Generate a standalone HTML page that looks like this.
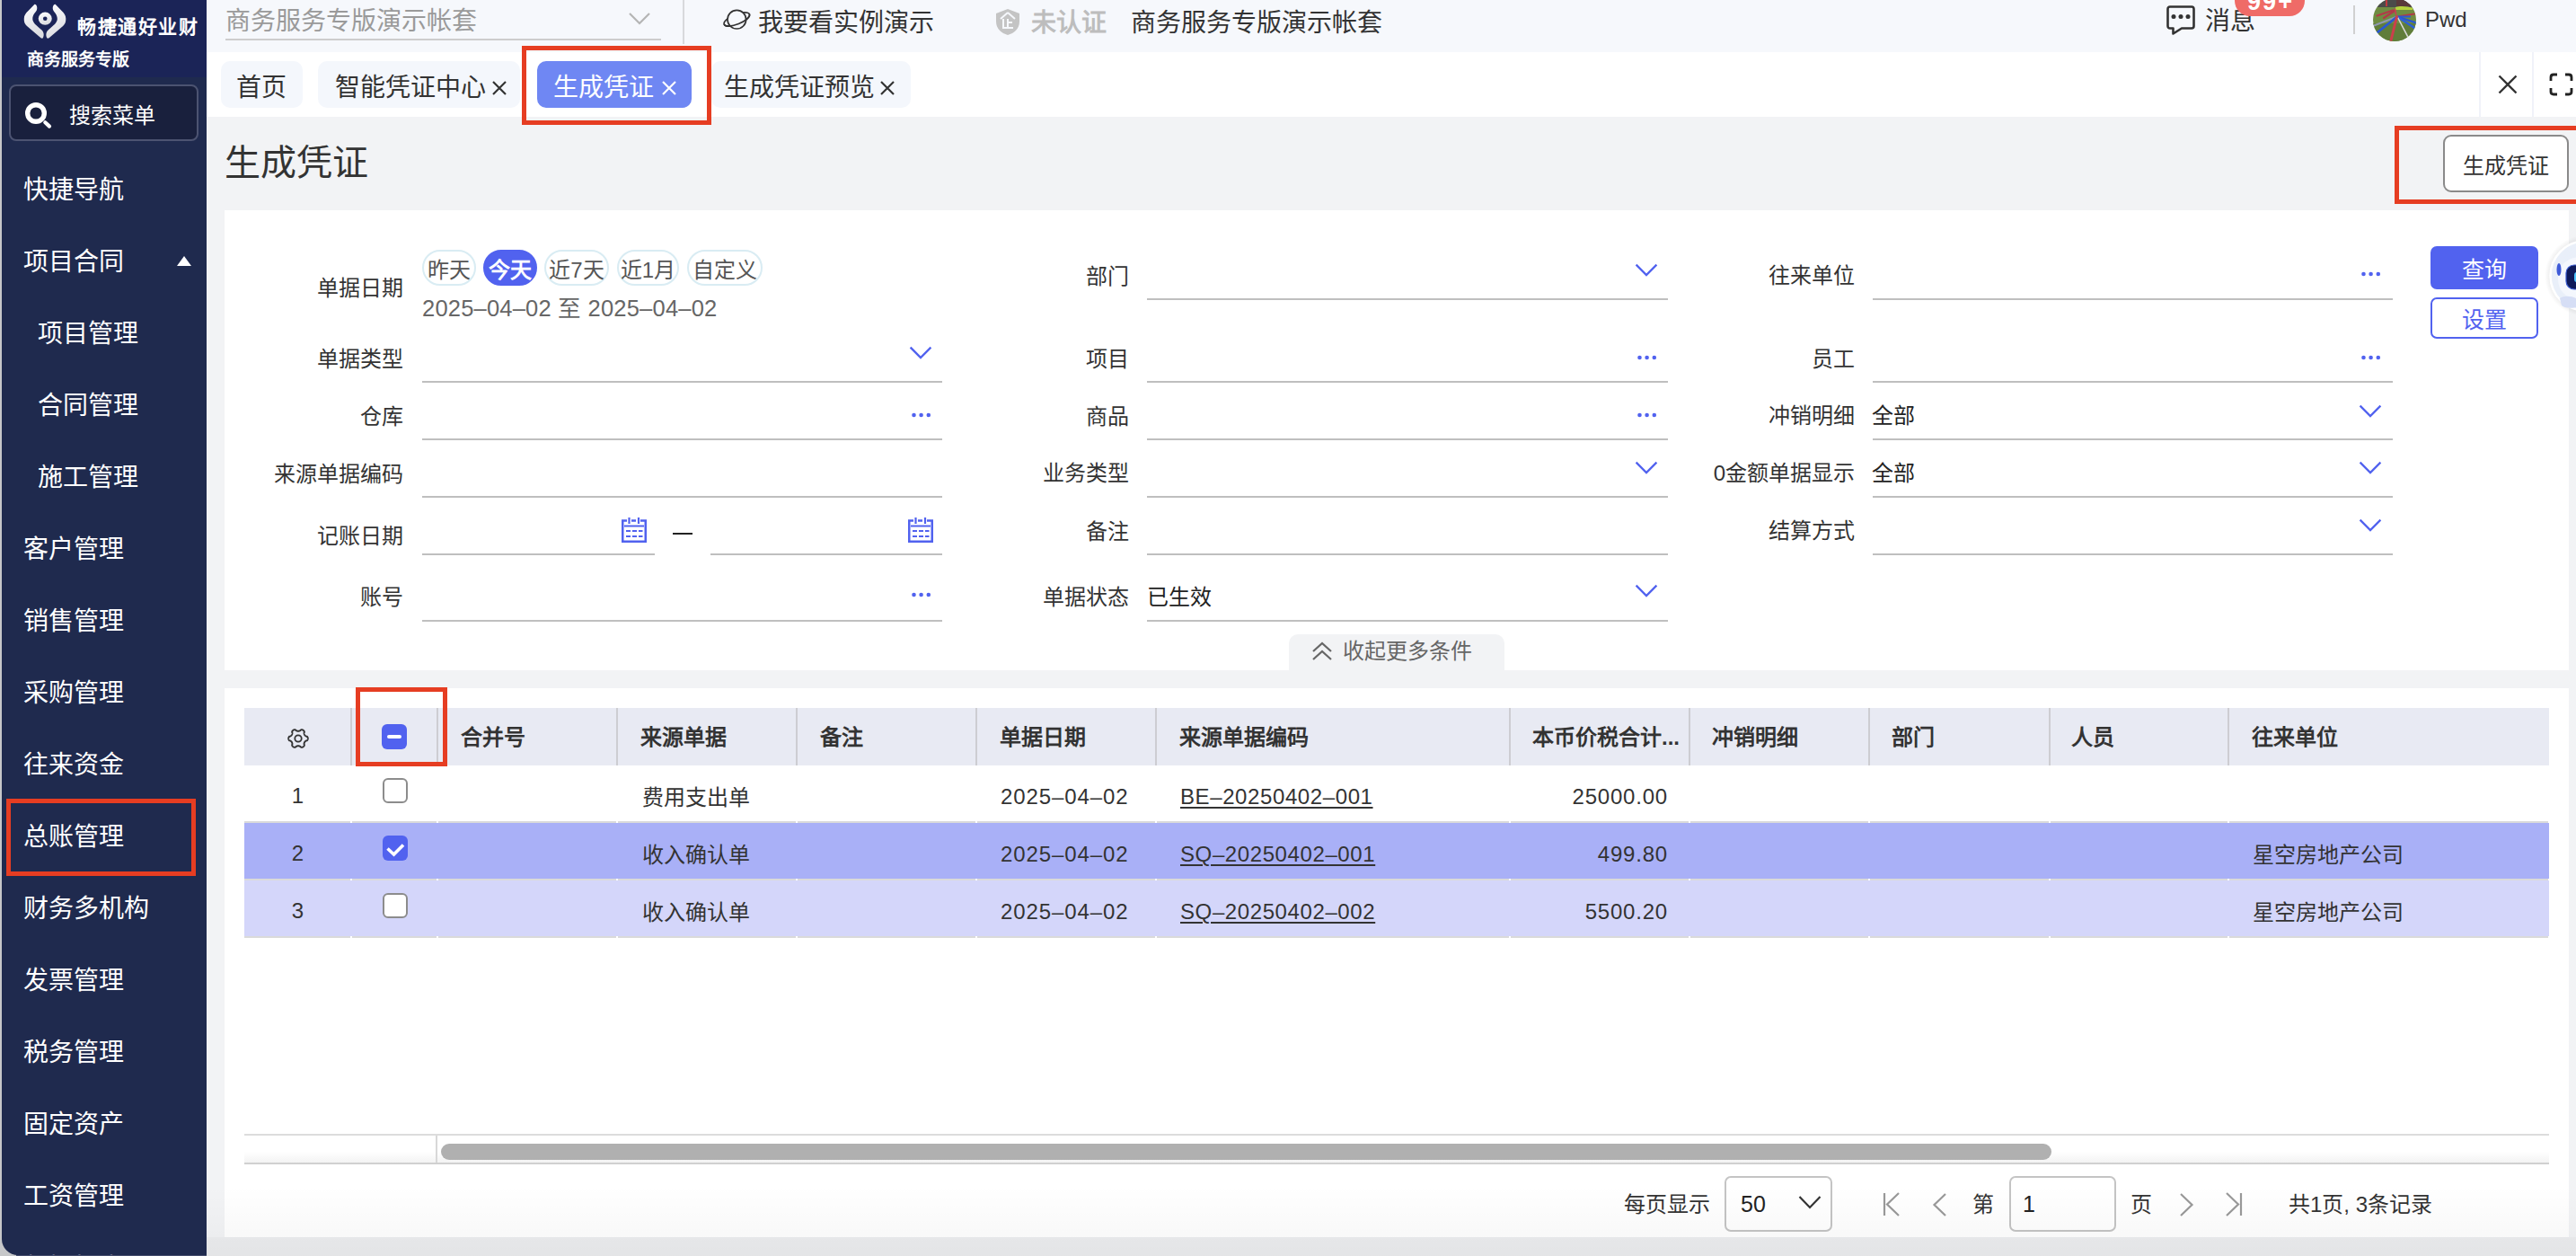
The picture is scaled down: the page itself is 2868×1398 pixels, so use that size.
<!DOCTYPE html>
<html lang="zh-CN">
<head>
<meta charset="utf-8">
<style>
*{box-sizing:border-box;margin:0;padding:0}
html,body{width:2868px;height:1398px;overflow:hidden}
body{position:relative;background:#f2f3f5;font-family:"Liberation Sans",sans-serif;color:#333;}
.a{position:absolute;white-space:nowrap}
/* sidebar */
#sbg{position:absolute;left:0;top:0;width:30px;height:1398px;background:#c6c7c9}
#sbot{position:absolute;left:18px;top:1396px;width:212px;height:2px;background:#454d6e}
#side{position:absolute;left:2px;top:0;width:228px;height:1397px;background:#1f2a4e;border-bottom-left-radius:18px;overflow:hidden}
#side .hd{position:absolute;left:0;top:0;width:230px;height:86px;background:#1b2457}
#side .m{position:absolute;left:24px;color:#fff;font-size:28px;font-weight:500;line-height:40px}
#side .m.s{left:40px}
/* top bar */
#top{position:absolute;left:230px;top:0;width:2638px;height:58px;background:#f6f8fc}
#tabs{position:absolute;left:230px;top:58px;width:2638px;height:72px;background:#fff}
.tab{position:absolute;top:10px;height:52px;border-radius:10px;background:#f4f7fc;font-size:28px;line-height:59px;color:#333}
.red{position:absolute;border:5px solid #e63d22}
.lbl{position:absolute;font-size:24px;line-height:30px;color:#333;text-align:right;white-space:nowrap}
.ln{position:absolute;height:2px;background:#bfbfbf}
.val{position:absolute;font-size:24px;line-height:30px;color:#222;white-space:nowrap}
.dots{position:absolute;width:22px;height:6px}
.dots i{position:absolute;top:0;width:5px;height:5px;border-radius:50%;background:#5262ef}
.chev{position:absolute;width:26px;height:16px}
.chip{position:absolute;top:278px;height:40px;border:2px solid #d9ecf3;border-radius:20px;font-size:24px;line-height:41px;color:#555;text-align:center}
.th{position:absolute;top:788px;height:64px;font-size:24px;line-height:64px;font-weight:bold;color:#333}
.vd{position:absolute;width:2px;background:#cfcfcf}
.td{position:absolute;font-size:24px;line-height:30px;color:#333;white-space:nowrap}
</style>
</head>
<body>

<!-- SIDEBAR -->
<div id="sbg"></div>
<div id="sbot"></div>
<div id="side">
  <div class="hd"></div>
  <svg class="a" style="left:18px;top:0px" width="60" height="50" viewBox="0 0 60 50">
    <defs><linearGradient id="lg" x1="0" y1="0" x2="0.3" y2="1"><stop offset="0" stop-color="#ffffff"/><stop offset="1" stop-color="#dcdde2"/></linearGradient></defs>
    <path d="M18.5 4.8 C20.5 4.5 22 8 21 11 C20 13.5 16.3 16 16.3 21 C16.3 25 20 28 26 33 C29 35.5 29.2 39 28 42 C27.5 43 26.5 43 25.5 42.3 L10 29 C6.5 26 6.8 22 6.8 20.5 C6.8 17 9 14.5 11 12.5 Z" fill="url(#lg)"/>
    <path d="M41.6 4.8 C39.6 4.5 38.1 8 39.1 11 C40.1 13.5 43.8 16 43.8 21 C43.8 25 40.1 28 34.1 33 C31.1 35.5 30.9 39 32.1 42 C32.6 43 33.6 43 34.6 42.3 L50.1 29 C53.6 26 53.3 22 53.3 20.5 C53.3 17 51.1 14.5 49.1 12.5 Z" fill="url(#lg)"/>
    <ellipse cx="30.25" cy="20.7" rx="7.5" ry="7.1" fill="url(#lg)"/>
    <circle cx="30.25" cy="20.7" r="2.3" fill="#1b2457"/>
  </svg>
  <div class="a" style="left:84px;top:16px;font-size:21px;line-height:28px;font-weight:bold;color:#fff;letter-spacing:1.6px">畅捷通好业财</div>
  <div class="a" style="left:28px;top:53px;font-size:19px;line-height:28px;font-weight:bold;color:#fff">商务服务专版</div>
  <div class="a" style="left:8px;top:94px;width:211px;height:63px;border:2px solid #4c5371;border-radius:8px;background:#19203d"></div>
  <svg class="a" style="left:22px;top:110px" width="36" height="36" viewBox="0 0 36 36">
    <circle cx="16" cy="16" r="9.3" fill="none" stroke="#fff" stroke-width="5.4"/>
    <line x1="26.3" y1="26.3" x2="31" y2="30.6" stroke="#fff" stroke-width="4.2" stroke-linecap="round"/>
  </svg>
  <div class="a" style="left:75px;top:112px;font-size:24px;line-height:34px;font-weight:500;color:#fff">搜索菜单</div>
  <div class="m" style="top:192px">快捷导航</div>
  <div class="m" style="top:272px">项目合同</div>
  <svg class="a" style="left:194px;top:284px" width="18" height="13" viewBox="0 0 18 13"><path d="M9 1 L17 12 L1 12 Z" fill="#fff"/></svg>
  <div class="m s" style="top:352px">项目管理</div>
  <div class="m s" style="top:432px">合同管理</div>
  <div class="m s" style="top:512px">施工管理</div>
  <div class="m" style="top:592px">客户管理</div>
  <div class="m" style="top:672px">销售管理</div>
  <div class="m" style="top:752px">采购管理</div>
  <div class="m" style="top:832px">往来资金</div>
  <div class="m" style="top:912px">总账管理</div>
  <div class="m" style="top:992px">财务多机构</div>
  <div class="m" style="top:1072px">发票管理</div>
  <div class="m" style="top:1152px">税务管理</div>
  <div class="m" style="top:1232px">固定资产</div>
  <div class="m" style="top:1312px">工资管理</div>
  <div class="m" style="top:1392px">数据报表</div>
</div>
<div class="red" style="left:7px;top:889px;width:211px;height:86px"></div>

<!-- TOP BAR -->
<div id="top">
  <div class="a" style="left:21px;top:6px;font-size:28px;line-height:36px;color:#9a9a9a">商务服务专版演示帐套</div>
  <div class="a" style="left:21px;top:43px;width:485px;height:2px;background:#cdcdcd"></div>
  <svg class="a" style="left:469px;top:12px" width="26" height="18" viewBox="0 0 26 18"><path d="M2 3 L13 14 L24 3" fill="none" stroke="#b5b5b5" stroke-width="2.2"/></svg>
  <div class="a" style="left:530px;top:0;width:2px;height:49px;background:#d8d9dc"></div>
  <svg class="a" style="left:574px;top:6px" width="34" height="30" viewBox="0 0 34 30">
    <ellipse cx="16.30" cy="15.50" rx="15.20" ry="5.60" transform="rotate(-22 16.30 15.50)" fill="none" stroke="#333" stroke-width="1.7"/>
    <circle cx="16.3" cy="15.7" r="10.3" fill="#f6f8fc" stroke="#333" stroke-width="1.7"/>
    <path d="M2.21 21.19 A15.20 5.60 -22 0 0 30.39 9.81" fill="none" stroke="#333" stroke-width="1.7"/>
  </svg>
  <div class="a" style="left:614px;top:8px;font-size:28px;line-height:36px;color:#333">我要看实例演示</div>
  <svg class="a" style="left:878px;top:9px" width="28" height="31" viewBox="0 0 28 31">
    <path d="M14 1 L27 6 L27 15 C27 23 21 28 14 30 C7 28 1 23 1 15 L1 6 Z" fill="#c4c4c4"/>
    <path d="M14 5 L22 12 M14 5 L6 12 M9 12 L9 22 L20 22 M14 12 L14 22 M14 16 L19 16" fill="none" stroke="#f6f8fc" stroke-width="2"/>
  </svg>
  <div class="a" style="left:918px;top:8px;font-size:28px;line-height:36px;color:#bdbdbd;font-weight:bold">未认证</div>
  <div class="a" style="left:1029px;top:8px;font-size:28px;line-height:36px;color:#333">商务服务专版演示帐套</div>
  <svg class="a" style="left:2181px;top:5px" width="34" height="34" viewBox="0 0 34 34">
    <path d="M5 2.5 L29 2.5 C30.5 2.5 31.5 3.5 31.5 5 L31.5 24 C31.5 25.5 30.5 26.5 29 26.5 L18 26.5 L8.5 32.5 L8.5 26.5 L5 26.5 C3.5 26.5 2.5 25.5 2.5 24 L2.5 5 C2.5 3.5 3.5 2.5 5 2.5 Z" fill="none" stroke="#333" stroke-width="2.6" stroke-linejoin="round"/>
    <circle cx="9" cy="13.5" r="2.5" fill="#333"/><circle cx="17" cy="13.5" r="2.5" fill="#333"/><circle cx="25" cy="13.5" r="2.5" fill="#333"/>
  </svg>
  <div class="a" style="left:2225px;top:6px;font-size:28px;line-height:36px;color:#333">消息</div>
  <div class="a" style="left:2258px;top:-18px;width:78px;height:36px;border-radius:17px;background:#ef6b67;overflow:hidden"><div class="a" style="left:0;top:6px;width:78px;text-align:center;color:#fff;font-weight:bold;font-size:27px;line-height:28px;letter-spacing:2px;padding-left:2px">99+</div></div>
  <div class="a" style="left:2390px;top:6px;width:2px;height:32px;background:#d0d0d0"></div>
  <svg class="a" style="left:2412px;top:-2px" width="48" height="48" viewBox="0 0 48 48">
    <defs><clipPath id="av"><circle cx="24" cy="24" r="24"/></clipPath></defs>
    <g clip-path="url(#av)">
      <rect width="48" height="48" fill="#6f8c42"/>
      <rect x="0" y="28" width="48" height="20" fill="#607d3a"/>
      <rect width="48" height="10" fill="#4b4b4a"/>
      <rect x="26" y="0" width="22" height="9" fill="#5a3a3a"/>
      <rect x="14" y="0" width="2" height="9" fill="#c0393f"/>
      <path d="M25 10 C30 8 40 9 44 11 L44 13 L25 13 Z" fill="#b5d33c"/>
      <g stroke-linecap="round">
        <path d="M22 13.5 L4.5 19.5" stroke="#b23a48" stroke-width="2.2"/>
        <path d="M24 14 L12 22" stroke="#b23a48" stroke-width="2.2"/>
        <path d="M27 20.5 L46 17.5" stroke="#b03a48" stroke-width="1.8"/>
        <path d="M27 20.5 L41 20.5" stroke="#2b5cd4" stroke-width="2.2"/>
        <path d="M27 20.5 L48 27.5" stroke="#2856d0" stroke-width="2.2"/>
        <path d="M27 20.5 L46 33" stroke="#2c5fd8" stroke-width="2.6"/>
        <path d="M27 20.5 L38.6 42.6" stroke="#d8d8d8" stroke-width="1.6"/>
        <path d="M27 20.5 L1 30.5" stroke="#8f98b0" stroke-width="2"/>
        <path d="M27 20.5 L5 38" stroke="#2a58d2" stroke-width="2.8"/>
        <path d="M26.5 20.5 L20 47" stroke="#cc3f4b" stroke-width="3"/>
        <path d="M25.5 18 L24.5 12" stroke="#c94050" stroke-width="1.6"/>
      </g>
    </g>
  </svg>
  <div class="a" style="left:2470px;top:8px;font-size:24px;line-height:28px;color:#333">Pwd</div>
</div>
<div id="tabs">
  <div class="tab" style="left:16px;width:91px;padding-left:17px">首页</div>
  <div class="tab" style="left:124px;width:225px;padding-left:19px">智能凭证中心<svg class="a" style="left:194px;top:22px" width="16" height="16" viewBox="0 0 16 16"><path d="M1 1 L15 15 M15 1 L1 15" stroke="#333" stroke-width="2.2"/></svg></div>
  <div class="tab" style="left:368px;width:172px;padding-left:18px;background:#6f87f3;color:#fff">生成凭证<svg class="a" style="left:139px;top:22px" width="16" height="16" viewBox="0 0 16 16"><path d="M1 1 L15 15 M15 1 L1 15" stroke="#fff" stroke-width="2.2"/></svg></div>
  <div class="tab" style="left:562px;width:222px;padding-left:14px">生成凭证预览<svg class="a" style="left:188px;top:22px" width="16" height="16" viewBox="0 0 16 16"><path d="M1 1 L15 15 M15 1 L1 15" stroke="#333" stroke-width="2.2"/></svg></div>
  <div class="a" style="left:2530px;top:0;width:2px;height:72px;background:#f0f2f9"></div>
  <div class="a" style="left:2589px;top:0;width:2px;height:72px;background:#f0f2f9"></div>
  <svg class="a" style="left:2551px;top:25px" width="22" height="22" viewBox="0 0 22 22"><path d="M1.5 1.5 L20.5 20.5 M20.5 1.5 L1.5 20.5" stroke="#333" stroke-width="2.4"/></svg>
  <svg class="a" style="left:2608px;top:23px" width="27" height="26" viewBox="0 0 27 26">
    <path d="M2 9 L2 5 C2 3.3 3.3 2 5 2 L9 2 M18 2 L22 2 C23.7 2 25 3.3 25 5 L25 9 M25 17 L25 21 C25 22.7 23.7 24 22 24 L18 24 M9 24 L5 24 C3.3 24 2 22.7 2 21 L2 17" fill="none" stroke="#222" stroke-width="2.8"/>
  </svg>
</div>
<div class="red" style="left:581px;top:51px;width:211px;height:88px"></div>

<!-- PAGE HEADER -->
<div class="a" style="left:250px;top:153px;font-size:40px;line-height:56px;color:#333">生成凭证</div>
<div class="a" style="left:2720px;top:150px;width:140px;height:64px;border:2px solid #8a8a8a;border-radius:9px;background:#fff;font-size:24px;line-height:66px;text-align:center;color:#333">生成凭证</div>
<div class="red" style="left:2666px;top:140px;width:220px;height:87px"></div>

<!-- FORM PANEL -->
<div class="a" style="left:250px;top:234px;width:2610px;height:512px;background:#fff"></div>
<!-- FORM START -->
<div class="lbl" style="left:149px;top:306px;width:300px">单据日期</div>
<div class="lbl" style="left:149px;top:385px;width:300px">单据类型</div>
<div class="ln" style="left:470px;top:424px;width:579px"></div>
<svg class="a" style="left:1012px;top:385px" width="26" height="16" viewBox="0 0 26 16"><path d="M1.6 1.6 L13 13 L24.4 1.6" fill="none" stroke="#5162ef" stroke-width="2.3"/></svg>
<div class="lbl" style="left:149px;top:449px;width:300px">仓库</div>
<div class="ln" style="left:470px;top:488px;width:579px"></div>
<svg class="a" style="left:1015px;top:459px" width="22" height="6" viewBox="0 0 22 6"><circle cx="2.5" cy="3" r="2.3" fill="#5162ef"/><circle cx="10.6" cy="3" r="2.3" fill="#5162ef"/><circle cx="18.8" cy="3" r="2.3" fill="#5162ef"/></svg>
<div class="lbl" style="left:149px;top:513px;width:300px">来源单据编码</div>
<div class="ln" style="left:470px;top:552px;width:579px"></div>
<div class="lbl" style="left:149px;top:582px;width:300px">记账日期</div>
<div class="ln" style="left:470px;top:616px;width:259px"></div>
<div class="ln" style="left:791px;top:616px;width:258px"></div>
<svg class="a" style="left:692px;top:576px" width="28" height="28" viewBox="0 0 28 28">
<path d="M1.25 28 L1.25 3.5 L6 3.5 M11 3.5 L16 3.5 M21 3.5 L26.75 3.5 L26.75 28" fill="none" stroke="#5162ef" stroke-width="2.5"/>
<path d="M1.25 26.75 L26.75 26.75" stroke="#5162ef" stroke-width="2.5"/>
<path d="M8.5 0 L8.5 7 M19 0 L19 7" stroke="#5162ef" stroke-width="2.2"/>
<path d="M3 9.5 L25 9.5" stroke="#5162ef" stroke-width="2"/>
<path d="M5 15 L10 15 M12 15 L17 15 M19 15 L23.5 15 M5 21 L10 21 M12 21 L17 21 M19 21 L23.5 21" stroke="#5162ef" stroke-width="2"/>
</svg>
<svg class="a" style="left:1011px;top:576px" width="28" height="28" viewBox="0 0 28 28">
<path d="M1.25 28 L1.25 3.5 L6 3.5 M11 3.5 L16 3.5 M21 3.5 L26.75 3.5 L26.75 28" fill="none" stroke="#5162ef" stroke-width="2.5"/>
<path d="M1.25 26.75 L26.75 26.75" stroke="#5162ef" stroke-width="2.5"/>
<path d="M8.5 0 L8.5 7 M19 0 L19 7" stroke="#5162ef" stroke-width="2.2"/>
<path d="M3 9.5 L25 9.5" stroke="#5162ef" stroke-width="2"/>
<path d="M5 15 L10 15 M12 15 L17 15 M19 15 L23.5 15 M5 21 L10 21 M12 21 L17 21 M19 21 L23.5 21" stroke="#5162ef" stroke-width="2"/>
</svg>
<div class="a" style="left:749px;top:593px;width:22px;height:2px;background:#222"></div>
<div class="lbl" style="left:149px;top:650px;width:300px">账号</div>
<div class="ln" style="left:470px;top:690px;width:579px"></div>
<svg class="a" style="left:1015px;top:659px" width="22" height="6" viewBox="0 0 22 6"><circle cx="2.5" cy="3" r="2.3" fill="#5162ef"/><circle cx="10.6" cy="3" r="2.3" fill="#5162ef"/><circle cx="18.8" cy="3" r="2.3" fill="#5162ef"/></svg>
<div class="lbl" style="left:957px;top:293px;width:300px">部门</div>
<div class="ln" style="left:1277px;top:332px;width:580px"></div>
<svg class="a" style="left:1820px;top:293px" width="26" height="16" viewBox="0 0 26 16"><path d="M1.6 1.6 L13 13 L24.4 1.6" fill="none" stroke="#5162ef" stroke-width="2.3"/></svg>
<div class="lbl" style="left:957px;top:385px;width:300px">项目</div>
<div class="ln" style="left:1277px;top:424px;width:580px"></div>
<svg class="a" style="left:1823px;top:395px" width="22" height="6" viewBox="0 0 22 6"><circle cx="2.5" cy="3" r="2.3" fill="#5162ef"/><circle cx="10.6" cy="3" r="2.3" fill="#5162ef"/><circle cx="18.8" cy="3" r="2.3" fill="#5162ef"/></svg>
<div class="lbl" style="left:957px;top:449px;width:300px">商品</div>
<div class="ln" style="left:1277px;top:488px;width:580px"></div>
<svg class="a" style="left:1823px;top:459px" width="22" height="6" viewBox="0 0 22 6"><circle cx="2.5" cy="3" r="2.3" fill="#5162ef"/><circle cx="10.6" cy="3" r="2.3" fill="#5162ef"/><circle cx="18.8" cy="3" r="2.3" fill="#5162ef"/></svg>
<div class="lbl" style="left:957px;top:512px;width:300px">业务类型</div>
<div class="ln" style="left:1277px;top:552px;width:580px"></div>
<svg class="a" style="left:1820px;top:513px" width="26" height="16" viewBox="0 0 26 16"><path d="M1.6 1.6 L13 13 L24.4 1.6" fill="none" stroke="#5162ef" stroke-width="2.3"/></svg>
<div class="lbl" style="left:957px;top:577px;width:300px">备注</div>
<div class="ln" style="left:1277px;top:616px;width:580px"></div>
<div class="lbl" style="left:957px;top:650px;width:300px">单据状态</div>
<div class="ln" style="left:1277px;top:690px;width:580px"></div>
<svg class="a" style="left:1820px;top:650px" width="26" height="16" viewBox="0 0 26 16"><path d="M1.6 1.6 L13 13 L24.4 1.6" fill="none" stroke="#5162ef" stroke-width="2.3"/></svg>
<div class="val" style="left:1277px;top:650px">已生效</div>
<div class="lbl" style="left:1765px;top:292px;width:300px">往来单位</div>
<div class="ln" style="left:2085px;top:332px;width:579px"></div>
<svg class="a" style="left:2629px;top:302px" width="22" height="6" viewBox="0 0 22 6"><circle cx="2.5" cy="3" r="2.3" fill="#5162ef"/><circle cx="10.6" cy="3" r="2.3" fill="#5162ef"/><circle cx="18.8" cy="3" r="2.3" fill="#5162ef"/></svg>
<div class="lbl" style="left:1765px;top:385px;width:300px">员工</div>
<div class="ln" style="left:2085px;top:424px;width:579px"></div>
<svg class="a" style="left:2629px;top:395px" width="22" height="6" viewBox="0 0 22 6"><circle cx="2.5" cy="3" r="2.3" fill="#5162ef"/><circle cx="10.6" cy="3" r="2.3" fill="#5162ef"/><circle cx="18.8" cy="3" r="2.3" fill="#5162ef"/></svg>
<div class="lbl" style="left:1765px;top:448px;width:300px">冲销明细</div>
<div class="ln" style="left:2085px;top:488px;width:579px"></div>
<svg class="a" style="left:2626px;top:450px" width="26" height="16" viewBox="0 0 26 16"><path d="M1.6 1.6 L13 13 L24.4 1.6" fill="none" stroke="#5162ef" stroke-width="2.3"/></svg>
<div class="val" style="left:2084px;top:448px">全部</div>
<div class="lbl" style="left:1765px;top:512px;width:300px">0金额单据显示</div>
<div class="ln" style="left:2085px;top:552px;width:579px"></div>
<svg class="a" style="left:2626px;top:513px" width="26" height="16" viewBox="0 0 26 16"><path d="M1.6 1.6 L13 13 L24.4 1.6" fill="none" stroke="#5162ef" stroke-width="2.3"/></svg>
<div class="val" style="left:2084px;top:512px">全部</div>
<div class="lbl" style="left:1765px;top:576px;width:300px">结算方式</div>
<div class="ln" style="left:2085px;top:616px;width:579px"></div>
<svg class="a" style="left:2626px;top:577px" width="26" height="16" viewBox="0 0 26 16"><path d="M1.6 1.6 L13 13 L24.4 1.6" fill="none" stroke="#5162ef" stroke-width="2.3"/></svg>
<div class="chip" style="left:470px;width:60px">昨天</div>
<div class="chip" style="left:538px;width:60px;background:#5162ef;border-color:#5162ef;color:#fff;font-weight:bold">今天</div>
<div class="chip" style="left:606px;width:72px">近7天</div>
<div class="chip" style="left:687px;width:69px">近1月</div>
<div class="chip" style="left:765px;width:84px">自定义</div>
<div class="a" style="left:470px;top:328px;font-size:25.5px;line-height:30px;color:#666;letter-spacing:0.2px">2025–04–02 至 2025–04–02</div>
<div class="a" style="left:2706px;top:274px;width:120px;height:48px;border-radius:7px;background:#5162ef;color:#fff;font-size:25px;line-height:52px;text-align:center">查询</div>
<div class="a" style="left:2706px;top:331px;width:120px;height:46px;border-radius:7px;border:2px solid #5162ef;background:#fff;color:#5162ef;font-size:25px;line-height:46px;text-align:center">设置</div>
<div class="a" style="left:1435px;top:706px;width:240px;height:40px;border-radius:10px 10px 0 0;background:#f2f3f5"></div>
<svg class="a" style="left:1460px;top:714px" width="24" height="22" viewBox="0 0 24 22"><path d="M2 11 L12 2 L22 11 M2 20 L12 11 L22 20" fill="none" stroke="#666" stroke-width="2.2"/></svg>
<div class="a" style="left:1495px;top:710px;font-size:24px;line-height:30px;color:#666">收起更多条件</div>
<svg class="a" style="left:2826px;top:256px" width="42" height="104" viewBox="0 0 42 104">
<defs><radialGradient id="rsh" cx="0.5" cy="0.5" r="0.5"><stop offset="0.8" stop-color="#000" stop-opacity="0.10"/><stop offset="1" stop-color="#000" stop-opacity="0"/></radialGradient></defs>
<circle cx="52" cy="51" r="45" fill="url(#rsh)"/>
<circle cx="52" cy="51" r="38.5" fill="#e9eff9" stroke="#ffffff" stroke-width="2.5"/>
<path d="M22 54 C22 38 34 30 48 30 L48 78 C34 78 22 70 22 54 Z" fill="#f4f7fd"/>
<ellipse cx="23" cy="44" rx="2.5" ry="7" fill="#3f5bd8"/>
<rect x="31" y="39" width="24" height="27" rx="9" fill="#0e1a5a" stroke="#3a5bd0" stroke-width="1.2"/>
<rect x="40" y="47" width="8" height="11" rx="3" fill="#4cc3ff"/>
<path d="M24 76 C28 73 36 73 42 76 L42 86 C34 88 28 86 26 84 Z" fill="#d6def5"/>
</svg>
<!-- FORM END -->
<!-- TABLE PANEL -->
<div class="a" style="left:250px;top:766px;width:2610px;height:611px;background:#fff"></div>
<!-- TABLE START -->
<div class="a" style="left:272px;top:788px;width:2566px;height:64px;background:#e8eaf3"></div>
<div class="a" style="left:390px;top:788px;width:2px;height:64px;background:#cdcdd2"></div>
<div class="a" style="left:486px;top:788px;width:2px;height:64px;background:#cdcdd2"></div>
<div class="a" style="left:686px;top:788px;width:2px;height:64px;background:#cdcdd2"></div>
<div class="a" style="left:886px;top:788px;width:2px;height:64px;background:#cdcdd2"></div>
<div class="a" style="left:1086px;top:788px;width:2px;height:64px;background:#cdcdd2"></div>
<div class="a" style="left:1286px;top:788px;width:2px;height:64px;background:#cdcdd2"></div>
<div class="a" style="left:1680px;top:788px;width:2px;height:64px;background:#cdcdd2"></div>
<div class="a" style="left:1880px;top:788px;width:2px;height:64px;background:#cdcdd2"></div>
<div class="a" style="left:2080px;top:788px;width:2px;height:64px;background:#cdcdd2"></div>
<div class="a" style="left:2281px;top:788px;width:2px;height:64px;background:#cdcdd2"></div>
<div class="a" style="left:2480px;top:788px;width:2px;height:64px;background:#cdcdd2"></div>
<div class="a" style="left:272px;top:852px;width:2566px;height:62px;background:#ffffff"></div>
<div class="a" style="left:272px;top:914px;width:118px;height:2px;background:#dadada"></div>
<div class="a" style="left:392px;top:914px;width:94px;height:2px;background:#dadada"></div>
<div class="a" style="left:488px;top:914px;width:198px;height:2px;background:#dadada"></div>
<div class="a" style="left:688px;top:914px;width:198px;height:2px;background:#dadada"></div>
<div class="a" style="left:888px;top:914px;width:198px;height:2px;background:#dadada"></div>
<div class="a" style="left:1088px;top:914px;width:198px;height:2px;background:#dadada"></div>
<div class="a" style="left:1288px;top:914px;width:392px;height:2px;background:#dadada"></div>
<div class="a" style="left:1682px;top:914px;width:198px;height:2px;background:#dadada"></div>
<div class="a" style="left:1882px;top:914px;width:198px;height:2px;background:#dadada"></div>
<div class="a" style="left:2082px;top:914px;width:199px;height:2px;background:#dadada"></div>
<div class="a" style="left:2283px;top:914px;width:197px;height:2px;background:#dadada"></div>
<div class="a" style="left:2482px;top:914px;width:355px;height:2px;background:#dadada"></div>
<div class="a" style="left:272px;top:916px;width:2566px;height:62px;background:#a9b0f7"></div>
<div class="a" style="left:272px;top:978px;width:118px;height:2px;background:#dadada"></div>
<div class="a" style="left:392px;top:978px;width:94px;height:2px;background:#dadada"></div>
<div class="a" style="left:488px;top:978px;width:198px;height:2px;background:#dadada"></div>
<div class="a" style="left:688px;top:978px;width:198px;height:2px;background:#dadada"></div>
<div class="a" style="left:888px;top:978px;width:198px;height:2px;background:#dadada"></div>
<div class="a" style="left:1088px;top:978px;width:198px;height:2px;background:#dadada"></div>
<div class="a" style="left:1288px;top:978px;width:392px;height:2px;background:#dadada"></div>
<div class="a" style="left:1682px;top:978px;width:198px;height:2px;background:#dadada"></div>
<div class="a" style="left:1882px;top:978px;width:198px;height:2px;background:#dadada"></div>
<div class="a" style="left:2082px;top:978px;width:199px;height:2px;background:#dadada"></div>
<div class="a" style="left:2283px;top:978px;width:197px;height:2px;background:#dadada"></div>
<div class="a" style="left:2482px;top:978px;width:355px;height:2px;background:#dadada"></div>
<div class="a" style="left:272px;top:980px;width:2566px;height:62px;background:#d4d6fa"></div>
<div class="a" style="left:272px;top:1042px;width:118px;height:2px;background:#dadada"></div>
<div class="a" style="left:392px;top:1042px;width:94px;height:2px;background:#dadada"></div>
<div class="a" style="left:488px;top:1042px;width:198px;height:2px;background:#dadada"></div>
<div class="a" style="left:688px;top:1042px;width:198px;height:2px;background:#dadada"></div>
<div class="a" style="left:888px;top:1042px;width:198px;height:2px;background:#dadada"></div>
<div class="a" style="left:1088px;top:1042px;width:198px;height:2px;background:#dadada"></div>
<div class="a" style="left:1288px;top:1042px;width:392px;height:2px;background:#dadada"></div>
<div class="a" style="left:1682px;top:1042px;width:198px;height:2px;background:#dadada"></div>
<div class="a" style="left:1882px;top:1042px;width:198px;height:2px;background:#dadada"></div>
<div class="a" style="left:2082px;top:1042px;width:199px;height:2px;background:#dadada"></div>
<div class="a" style="left:2283px;top:1042px;width:197px;height:2px;background:#dadada"></div>
<div class="a" style="left:2482px;top:1042px;width:355px;height:2px;background:#dadada"></div>
<div class="a" style="left:513px;top:806px;font-size:24px;line-height:30px;font-weight:bold;color:#333">合并号</div>
<div class="a" style="left:713px;top:806px;font-size:24px;line-height:30px;font-weight:bold;color:#333">来源单据</div>
<div class="a" style="left:913px;top:806px;font-size:24px;line-height:30px;font-weight:bold;color:#333">备注</div>
<div class="a" style="left:1113px;top:806px;font-size:24px;line-height:30px;font-weight:bold;color:#333">单据日期</div>
<div class="a" style="left:1313px;top:806px;font-size:24px;line-height:30px;font-weight:bold;color:#333">来源单据编码</div>
<div class="a" style="left:1706px;top:806px;font-size:24px;line-height:30px;font-weight:bold;color:#333">本币价税合计...</div>
<div class="a" style="left:1906px;top:806px;font-size:24px;line-height:30px;font-weight:bold;color:#333">冲销明细</div>
<div class="a" style="left:2106px;top:806px;font-size:24px;line-height:30px;font-weight:bold;color:#333">部门</div>
<div class="a" style="left:2306px;top:806px;font-size:24px;line-height:30px;font-weight:bold;color:#333">人员</div>
<div class="a" style="left:2507px;top:806px;font-size:24px;line-height:30px;font-weight:bold;color:#333">往来单位</div>
<svg class="a" style="left:318px;top:808px" width="28" height="28" viewBox="0 0 28 28">
<path d="M24.80 14.00 L24.78 14.38 L24.71 14.75 L24.60 15.11 L24.44 15.47 L24.23 15.80 L23.96 16.12 L23.58 16.39 L22.77 16.52 L22.39 16.73 L22.09 16.95 L21.84 17.17 L21.62 17.39 L21.43 17.62 L21.25 17.86 L21.10 18.10 L20.97 18.35 L20.85 18.62 L20.75 18.90 L20.66 19.21 L20.60 19.54 L20.55 19.90 L20.56 20.34 L20.86 21.10 L20.81 21.57 L20.68 21.96 L20.49 22.31 L20.26 22.62 L20.00 22.90 L19.71 23.15 L19.40 23.35 L19.06 23.52 L18.71 23.65 L18.33 23.74 L17.95 23.77 L17.55 23.76 L17.15 23.68 L16.72 23.49 L16.21 22.85 L15.83 22.63 L15.50 22.48 L15.18 22.38 L14.87 22.30 L14.58 22.24 L14.29 22.21 L14.00 22.20 L13.71 22.21 L13.42 22.24 L13.13 22.30 L12.82 22.38 L12.50 22.48 L12.17 22.63 L11.79 22.85 L11.28 23.49 L10.85 23.68 L10.45 23.76 L10.05 23.77 L9.67 23.74 L9.29 23.65 L8.94 23.52 L8.60 23.35 L8.29 23.15 L8.00 22.90 L7.74 22.62 L7.51 22.31 L7.32 21.96 L7.19 21.57 L7.14 21.10 L7.44 20.34 L7.45 19.90 L7.40 19.54 L7.34 19.21 L7.25 18.90 L7.15 18.62 L7.03 18.35 L6.90 18.10 L6.75 17.86 L6.57 17.62 L6.38 17.39 L6.16 17.17 L5.91 16.95 L5.61 16.73 L5.23 16.52 L4.42 16.39 L4.04 16.12 L3.77 15.80 L3.56 15.47 L3.40 15.11 L3.29 14.75 L3.22 14.38 L3.20 14.00 L3.22 13.62 L3.29 13.25 L3.40 12.89 L3.56 12.53 L3.77 12.20 L4.04 11.88 L4.42 11.61 L5.23 11.48 L5.61 11.27 L5.91 11.05 L6.16 10.83 L6.38 10.61 L6.57 10.38 L6.75 10.14 L6.90 9.90 L7.03 9.65 L7.15 9.38 L7.25 9.10 L7.34 8.79 L7.40 8.46 L7.45 8.10 L7.44 7.66 L7.14 6.90 L7.19 6.43 L7.32 6.04 L7.51 5.69 L7.74 5.38 L8.00 5.10 L8.29 4.85 L8.60 4.65 L8.94 4.48 L9.29 4.35 L9.67 4.26 L10.05 4.23 L10.45 4.24 L10.85 4.32 L11.28 4.51 L11.79 5.15 L12.17 5.37 L12.50 5.52 L12.82 5.62 L13.13 5.70 L13.42 5.76 L13.71 5.79 L14.00 5.80 L14.29 5.79 L14.58 5.76 L14.87 5.70 L15.18 5.62 L15.50 5.52 L15.83 5.37 L16.21 5.15 L16.72 4.51 L17.15 4.32 L17.55 4.24 L17.95 4.23 L18.33 4.26 L18.71 4.35 L19.06 4.48 L19.40 4.65 L19.71 4.85 L20.00 5.10 L20.26 5.38 L20.49 5.69 L20.68 6.04 L20.81 6.43 L20.86 6.90 L20.56 7.66 L20.55 8.10 L20.60 8.46 L20.66 8.79 L20.75 9.10 L20.85 9.38 L20.97 9.65 L21.10 9.90 L21.25 10.14 L21.43 10.38 L21.62 10.61 L21.84 10.83 L22.09 11.05 L22.39 11.27 L22.77 11.48 L23.58 11.61 L23.96 11.88 L24.23 12.20 L24.44 12.53 L24.60 12.89 L24.71 13.25 L24.78 13.62 Z" fill="none" stroke="#333" stroke-width="1.9" stroke-linejoin="round"/>
<circle cx="14" cy="14" r="3.7" fill="none" stroke="#333" stroke-width="1.8"/>
</svg>
<div class="a" style="left:425px;top:806px;width:28px;height:28px;border-radius:6px;background:#5162ef"></div>
<div class="a" style="left:431px;top:818px;width:16px;height:4px;border-radius:2px;background:#fff"></div>
<div class="red" style="left:396px;top:765px;width:102px;height:88px"></div>
<div class="a" style="left:272px;top:871px;width:119px;text-align:center;font-size:24px;line-height:30px;color:#333">1</div>
<div class="a" style="left:426px;top:866px;width:28px;height:28px;border-radius:6px;border:2px solid #8c8c8c;background:#fff"></div>
<div class="td" style="left:715px;top:873px">费用支出单</div>
<div class="td" style="left:1114px;top:872px;letter-spacing:0.9px">2025–04–02</div>
<div class="td" style="left:1314px;top:872px;letter-spacing:0.6px;text-decoration:underline;text-underline-offset:3px">BE–20250402–001</div>
<div class="td" style="left:1455px;top:872px;width:402px;text-align:right;letter-spacing:0.8px">25000.00</div>
<div class="a" style="left:272px;top:935px;width:119px;text-align:center;font-size:24px;line-height:30px;color:#333">2</div>
<div class="a" style="left:426px;top:930px;width:28px;height:28px;border-radius:6px;background:#5162ef"></div>
<svg class="a" style="left:426px;top:930px" width="28" height="28" viewBox="0 0 28 28"><path d="M5.5 14.5 L12.5 21 L23 10.5" fill="none" stroke="#fff" stroke-width="3.6"/></svg>
<div class="td" style="left:715px;top:937px">收入确认单</div>
<div class="td" style="left:1114px;top:936px;letter-spacing:0.9px">2025–04–02</div>
<div class="td" style="left:1314px;top:936px;letter-spacing:0.6px;text-decoration:underline;text-underline-offset:3px">SQ–20250402–001</div>
<div class="td" style="left:1455px;top:936px;width:402px;text-align:right;letter-spacing:0.8px">499.80</div>
<div class="td" style="left:2508px;top:937px">星空房地产公司</div>
<div class="a" style="left:272px;top:999px;width:119px;text-align:center;font-size:24px;line-height:30px;color:#333">3</div>
<div class="a" style="left:426px;top:994px;width:28px;height:28px;border-radius:6px;border:2px solid #8c8c8c;background:#fff"></div>
<div class="td" style="left:715px;top:1001px">收入确认单</div>
<div class="td" style="left:1114px;top:1000px;letter-spacing:0.9px">2025–04–02</div>
<div class="td" style="left:1314px;top:1000px;letter-spacing:0.6px;text-decoration:underline;text-underline-offset:3px">SQ–20250402–002</div>
<div class="td" style="left:1455px;top:1000px;width:402px;text-align:right;letter-spacing:0.8px">5500.20</div>
<div class="td" style="left:2508px;top:1001px">星空房地产公司</div>
<div class="a" style="left:272px;top:1262px;width:2566px;height:2px;background:#dcdcdc"></div>
<div class="a" style="left:272px;top:1264px;width:2566px;height:30px;background:linear-gradient(#fff 60%,#f3f3f3)"></div>
<div class="a" style="left:272px;top:1294px;width:2566px;height:2px;background:#d0d0d0"></div>
<div class="a" style="left:485px;top:1264px;width:2px;height:30px;background:#d8d8d8"></div>
<div class="a" style="left:491px;top:1273px;width:1793px;height:18px;border-radius:9px;background:#b0b0b0"></div>
<div class="a" style="left:1808px;top:1326px;font-size:24px;line-height:30px;color:#333">每页显示</div>
<div class="a" style="left:1920px;top:1309px;width:120px;height:62px;border:2px solid #c4c4c4;border-radius:7px;background:#fff"></div>
<div class="a" style="left:1938px;top:1325px;font-size:25px;line-height:30px;color:#222">50</div>
<svg class="a" style="left:2002px;top:1330px" width="26" height="17" viewBox="0 0 26 17"><path d="M1.5 2 L13 14 L24.5 2" fill="none" stroke="#333" stroke-width="2.2"/></svg>
<svg class="a" style="left:2096px;top:1327px" width="20" height="27" viewBox="0 0 20 27"><path d="M2 1 L2 26 M18 1 L5 13.5 L18 26" fill="none" stroke="#999" stroke-width="2.2"/></svg>
<svg class="a" style="left:2151px;top:1328px" width="17" height="26" viewBox="0 0 17 26"><path d="M15 1 L2.5 13 L15 25" fill="none" stroke="#999" stroke-width="2.2"/></svg>
<div class="a" style="left:2196px;top:1326px;font-size:24px;line-height:30px;color:#333">第</div>
<div class="a" style="left:2237px;top:1309px;width:119px;height:62px;border:2px solid #c4c4c4;border-radius:7px;background:#fff"></div>
<div class="a" style="left:2252px;top:1325px;font-size:25px;line-height:30px;color:#222">1</div>
<div class="a" style="left:2372px;top:1326px;font-size:24px;line-height:30px;color:#333">页</div>
<svg class="a" style="left:2426px;top:1328px" width="17" height="26" viewBox="0 0 17 26"><path d="M2 1 L14.5 13 L2 25" fill="none" stroke="#999" stroke-width="2.2"/></svg>
<svg class="a" style="left:2477px;top:1327px" width="20" height="27" viewBox="0 0 20 27"><path d="M18 1 L18 26 M2 1 L15 13.5 L2 26" fill="none" stroke="#999" stroke-width="2.2"/></svg>
<div class="a" style="left:2548px;top:1326px;font-size:24px;line-height:30px;color:#333">共1页, 3条记录</div>
<!-- TABLE END -->

<div id="fade" class="a" style="left:230px;top:1320px;width:2638px;height:78px;background:linear-gradient(rgba(0,0,0,0),rgba(0,0,0,0.035));pointer-events:none"></div>
<div class="a" style="left:230px;top:1377px;width:2638px;height:21px;background:rgba(0,0,0,0.025)"></div>
</body>
</html>
